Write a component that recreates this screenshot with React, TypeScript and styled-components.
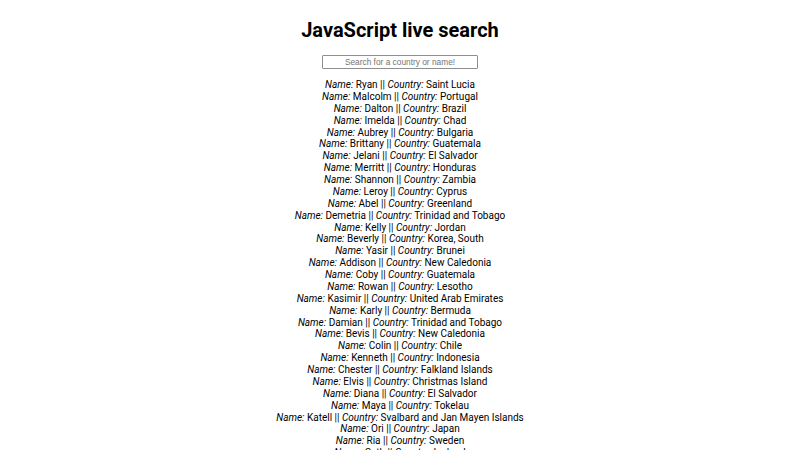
import React from 'react';
import styled, { createGlobalStyle } from 'styled-components';

const GlobalStyle = createGlobalStyle`
    body {
        margin: 0;
        background: #ffffff;
        font-family: Roboto, "Liberation Sans", sans-serif;
        color: #000000;
    }
`;

const Page = styled.div`
    display: flex;
    flex-direction: column;
    align-items: center;
    padding-top: 17px;
`;

const Title = styled.h1`
    margin: 0;
    font-size: 20px;
    font-weight: 700;
    line-height: 26px;
`;

const SearchInput = styled.input`
    margin-top: 12px;
    width: 156px;
    height: 14px;
    box-sizing: border-box;
    padding: 0 2px;
    border: 1px solid #8f8f8f;
    border-radius: 1px;
    font-family: "Liberation Sans", Arial, sans-serif;
    font-size: 8.33px;
    text-align: center;

    &::placeholder {
        color: #757575;
    }
`;

const List = styled.ul`
    list-style: none;
    margin: 10px 0 0;
    padding: 0;
    text-align: center;
    font-size: 10px;
    line-height: 11.87px;
`;

const Row = styled.li`
    white-space: nowrap;

    em {
        font-style: italic;
    }
`;

const people: [string, string][] = [
    ['Ryan', 'Saint Lucia'],
    ['Malcolm', 'Portugal'],
    ['Dalton', 'Brazil'],
    ['Imelda', 'Chad'],
    ['Aubrey', 'Bulgaria'],
    ['Brittany', 'Guatemala'],
    ['Jelani', 'El Salvador'],
    ['Merritt', 'Honduras'],
    ['Shannon', 'Zambia'],
    ['Leroy', 'Cyprus'],
    ['Abel', 'Greenland'],
    ['Demetria', 'Trinidad and Tobago'],
    ['Kelly', 'Jordan'],
    ['Beverly', 'Korea, South'],
    ['Yasir', 'Brunei'],
    ['Addison', 'New Caledonia'],
    ['Coby', 'Guatemala'],
    ['Rowan', 'Lesotho'],
    ['Kasimir', 'United Arab Emirates'],
    ['Karly', 'Bermuda'],
    ['Damian', 'Trinidad and Tobago'],
    ['Bevis', 'New Caledonia'],
    ['Colin', 'Chile'],
    ['Kenneth', 'Indonesia'],
    ['Chester', 'Falkland Islands'],
    ['Elvis', 'Christmas Island'],
    ['Diana', 'El Salvador'],
    ['Maya', 'Tokelau'],
    ['Katell', 'Svalbard and Jan Mayen Islands'],
    ['Ori', 'Japan'],
    ['Ria', 'Sweden'],
    ['Seth', 'Iceland'],
];

const App = () => {
    return (
        <>
            <GlobalStyle />
            <Page>
                <Title>JavaScript live search</Title>
                <SearchInput type="text" placeholder="Search for a country or name!" />
                <List>
                    {people.map(([name, country]) => (
                        <Row key={name}>
                            <em>Name:</em> {name} || <em>Country:</em> {country}
                        </Row>
                    ))}
                </List>
            </Page>
        </>
    );
};

export default App;
